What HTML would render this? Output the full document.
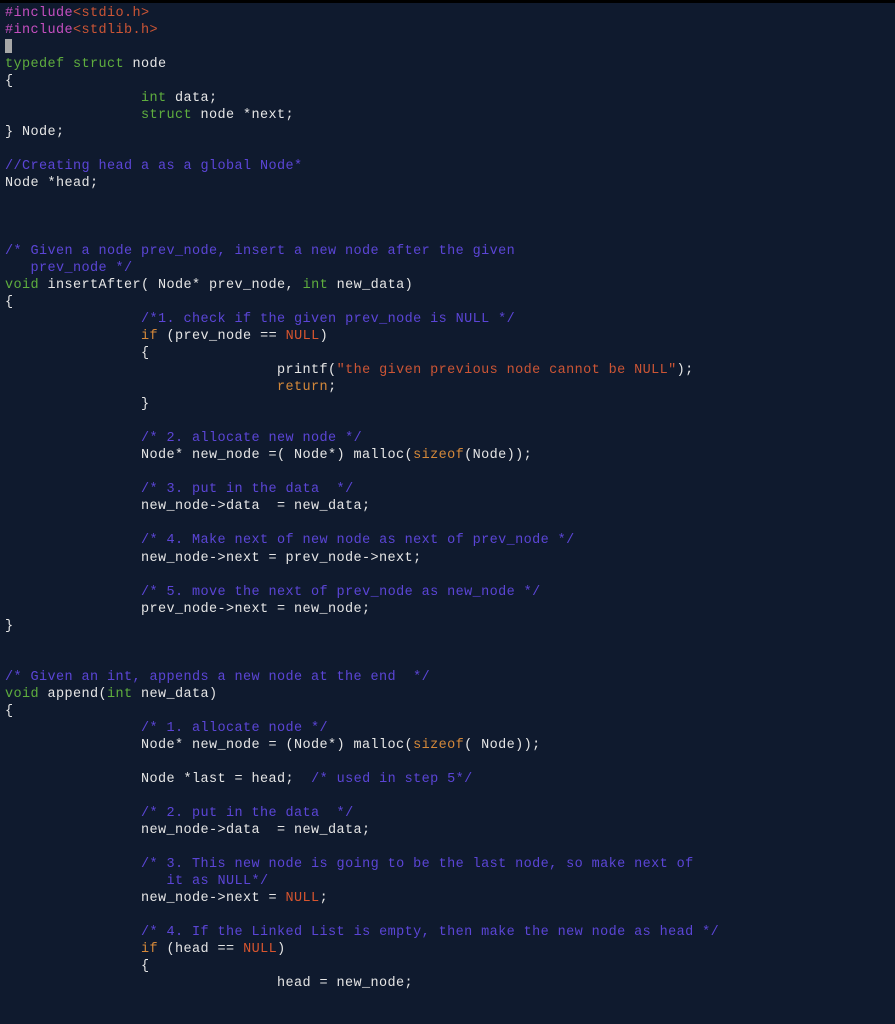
<!DOCTYPE html>
<html><head><meta charset="utf-8"><style>
html,body{margin:0;padding:0;background:#0f1a2e;width:895px;height:1024px;overflow:hidden}
.bar{position:absolute;top:0;left:0;width:895px;height:3px;background:#000}
pre{position:absolute;left:5px;top:4.5px;margin:0;font-family:"Liberation Mono",monospace;font-size:13.5px;letter-spacing:0.4px;line-height:17.03px;color:#e6e6e6}
.k{color:#5fae3e}.p{color:#c54fc0}.s{color:#cc5535}.c{color:#5b45d6}.o{color:#d4883a}.n{color:#d7552f}
.cur{display:inline-block;width:7px;height:14px;background:#a8a8a8;vertical-align:-3px}
</style></head><body><div class="bar"></div>
<pre><span class="p">#include</span><span class="s">&lt;stdio.h&gt;</span>
<span class="p">#include</span><span class="s">&lt;stdlib.h&gt;</span>
<span class="cur"></span>
<span class="k">typedef</span> <span class="k">struct</span> node
{
                <span class="k">int</span> data;
                <span class="k">struct</span> node *next;
} Node;

<span class="c">//Creating head a as a global Node*</span>
Node *head;



<span class="c">/* Given a node prev_node, insert a new node after the given</span>
<span class="c">   prev_node */</span>
<span class="k">void</span> insertAfter( Node* prev_node, <span class="k">int</span> new_data)
{
                <span class="c">/*1. check if the given prev_node is NULL */</span>
                <span class="o">if</span> (prev_node == <span class="n">NULL</span>)
                {
                                printf(<span class="s">"the given previous node cannot be NULL"</span>);
                                <span class="o">return</span>;
                }

                <span class="c">/* 2. allocate new node */</span>
                Node* new_node =( Node*) malloc(<span class="o">sizeof</span>(Node));

                <span class="c">/* 3. put in the data  */</span>
                new_node-&gt;data  = new_data;

                <span class="c">/* 4. Make next of new node as next of prev_node */</span>
                new_node-&gt;next = prev_node-&gt;next;

                <span class="c">/* 5. move the next of prev_node as new_node */</span>
                prev_node-&gt;next = new_node;
}


<span class="c">/* Given an int, appends a new node at the end  */</span>
<span class="k">void</span> append(<span class="k">int</span> new_data)
{
                <span class="c">/* 1. allocate node */</span>
                Node* new_node = (Node*) malloc(<span class="o">sizeof</span>( Node));

                Node *last = head;  <span class="c">/* used in step 5*/</span>

                <span class="c">/* 2. put in the data  */</span>
                new_node-&gt;data  = new_data;

                <span class="c">/* 3. This new node is going to be the last node, so make next of</span>
<span class="c">                   it as NULL*/</span>
                new_node-&gt;next = <span class="n">NULL</span>;

                <span class="c">/* 4. If the Linked List is empty, then make the new node as head */</span>
                <span class="o">if</span> (head == <span class="n">NULL</span>)
                {
                                head = new_node;
</pre></body></html>
